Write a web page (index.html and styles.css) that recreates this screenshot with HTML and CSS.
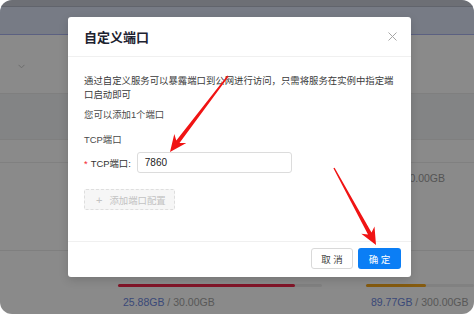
FILE: index.html
```html
<!DOCTYPE html>
<html lang="zh">
<head>
<meta charset="utf-8">
<title>自定义端口</title>
<link rel="stylesheet" href="styles.css">
</head>
<body>
<div class="window">
  <div class="chrome"></div>
  <div class="nav"></div>
  <div class="sec sec1">
    <svg class="chev" width="7" height="5" viewBox="0 0 7 5"><path d="M0.5 0.8 L3.5 3.8 L6.5 0.8" fill="none" stroke="#c8c8c8" stroke-width="1"/></svg>
  </div>
  <div class="sec sec2"></div>
  <div class="sec sec3">
    <div class="sec3-top"></div>
    <div class="sec3-row"><span class="bg-val">20.00GB</span></div>
  </div>
  <div class="sec sec4">
    <div class="usage">
      <div class="use use-left">
        <div class="track"><div class="fill fill-red" style="width: 86.7%"></div></div>
        <div class="nums"><span class="used">25.88GB</span> / 30.00GB</div>
      </div>
      <div class="use use-right">
        <div class="track"><div class="fill fill-gold" style="width: 56%"></div></div>
        <div class="nums"><span class="used">89.77GB</span> / 300.00GB</div>
      </div>
    </div>
  </div>

  <div class="mask"></div>

  <div class="modal">
    <div class="modal-head">
      <div class="modal-title">自定义端口</div>
      <svg class="close" width="9" height="9" viewBox="0 0 9 9"><path d="M0.5 0.5 L8.5 8.5 M8.5 0.5 L0.5 8.5" stroke="#a6a6a6" stroke-width="1" fill="none"/></svg>
    </div>
    <div class="modal-body">
      <p class="desc">通过自定义服务可以暴露端口到公网进行访问，只需将服务在实例中指定端口启动即可</p>
      <p class="hint">您可以添加1个端口</p>
      <p class="group">TCP端口</p>
      <div class="form-row">
        <label class="label"><span class="req">*</span>TCP端口:</label>
        <div class="input">7860</div>
      </div>
      <div class="add-btn"><span class="plus">+</span>添加端口配置</div>
    </div>
    <div class="modal-foot">
      <div class="btn btn-default">取 消</div>
      <div class="btn btn-primary">确 定</div>
    </div>
  </div>

  <svg class="arrows" width="474" height="314" viewBox="0 0 474 314">
    <polygon fill="#f01414" points="228.6,76.4 179.5,142.9 186.3,143.1 170,152 174.3,134.0 176.3,140.5 227.4,75.6"/>
    <polygon fill="#f01414" points="334.6,167.7 371.5,232.6 374.5,226.5 376,245 361.3,233.7 368.0,234.6 333.4,168.3"/>
  </svg>
</div>
</body>
</html>
```

FILE: styles.css
```css
* { box-sizing: border-box; }
html, body { margin: 0; padding: 0; background: #ffffff; }
body {
  font-family: "Liberation Sans", "Noto Sans CJK SC", sans-serif;
  width: 474px;
  height: 314px;
  overflow: hidden;
}
p { margin: 0; }

.window {
  position: relative;
  width: 474px;
  height: 314px;
  border-radius: 12px;
  overflow: hidden;
  background: #ffffff;
  display: flex;
  flex-direction: column;
}
.chrome {
  height: 7px;
  background: #c9ced9;
  border-bottom: 1px solid #b3b9c8;
}
.nav {
  height: 28px;
  background: #dce4f6;
  border-bottom: 1px solid #a9b2ee;
}
.sec1 {
  height: 58px;
  display: flex;
  align-items: center;
  padding-left: 18px;
  padding-top: 5px;
}
.sec2 {
  height: 47px;
  background: #f3f4f6;
  border-top: 1px solid #ebebeb;
  border-bottom: 1px solid #ebebeb;
}
.sec3 {
  height: 110px;
  display: flex;
  flex-direction: column;
}
.sec3-top {
  height: 23px;
  border-bottom: 1px solid #ececec;
}
.sec3-row {
  height: 30px;
  display: flex;
  justify-content: flex-end;
  align-items: center;
  padding-right: 29px;
}
.bg-val {
  font-size: 10.5px;
  color: #9c9c9c;
}
.sec4 {
  flex: 1;
  border-top: 1px solid #ebebeb;
  padding-top: 33px;
}
.usage {
  display: flex;
  padding-left: 118px;
  gap: 44px;
}
.use-left { width: 204px; }
.use-right { width: 108px; }
.track {
  height: 3px;
  background: #efefef;
  border-radius: 2px;
}
.fill { height: 3px; border-radius: 2px; }
.fill-red { background: #f0284a; }
.fill-gold { background: #f5a81c; }
.nums {
  margin-top: 9px;
  padding-left: 5px;
  font-size: 10.5px;
  color: #a3a3a3;
  white-space: nowrap;
}
.used { color: #6d88e0; }

.mask {
  position: absolute;
  inset: 0;
  background: rgba(0, 0, 0, 0.46);
}

.modal {
  position: absolute;
  left: 68px;
  top: 17px;
  width: 343px;
  height: 260px;
  background: #ffffff;
  border-radius: 3px;
  box-shadow: 0 3px 10px rgba(0, 0, 0, 0.15);
  display: flex;
  flex-direction: column;
}
.modal-head {
  height: 40px;
  border-bottom: 1px solid #f0f0f0;
  display: flex;
  align-items: center;
  justify-content: space-between;
  padding: 0 14px 0 16px;
}
.modal-title {
  font-size: 13px;
  font-weight: 700;
  color: #1d2230;
}
.modal-body {
  flex: 1;
  padding: 17px 14px 0 16px;
  font-size: 9.4px;
  color: #3a3a3a;
}
.desc { line-height: 14px; }
.hint { line-height: 14px; margin-top: 6px; color: #4a4a4a; }
.group { line-height: 14px; margin-top: 11px; color: #4a4a4a; }
.form-row {
  margin-top: 5px;
  display: flex;
  align-items: center;
  gap: 6px;
}
.label {
  color: #333;
  white-space: nowrap;
}
.req {
  color: #f5222d;
  margin-right: 3px;
}
.input {
  width: 155px;
  height: 21px;
  border: 1px solid #dcdcdc;
  border-radius: 3px;
  padding-left: 7px;
  display: flex;
  align-items: center;
  font-size: 10px;
  color: #222;
}
.add-btn {
  margin-top: 16px;
  width: 91px;
  height: 21px;
  border: 1px dashed #dedede;
  background: #f6f6f6;
  border-radius: 2px;
  color: #c2c2c2;
  display: flex;
  align-items: center;
  padding-left: 11px;
}
.plus {
  font-size: 11px;
  margin-right: 7px;
}
.modal-foot {
  height: 36px;
  border-top: 1px solid #f0f0f0;
  display: flex;
  justify-content: flex-end;
  align-items: flex-start;
  gap: 5px;
  padding: 6px 10px 0 0;
}
.btn {
  height: 21px;
  border-radius: 3px;
  font-size: 9.5px;
  display: flex;
  align-items: center;
  justify-content: center;
}
.btn-default {
  width: 42px;
  border: 1px solid #d9d9d9;
  color: #444;
  background: #fff;
}
.btn-primary {
  width: 43px;
  background: #0b7ef5;
  color: #fff;
}

.arrows {
  position: absolute;
  left: 0;
  top: 0;
}
```
